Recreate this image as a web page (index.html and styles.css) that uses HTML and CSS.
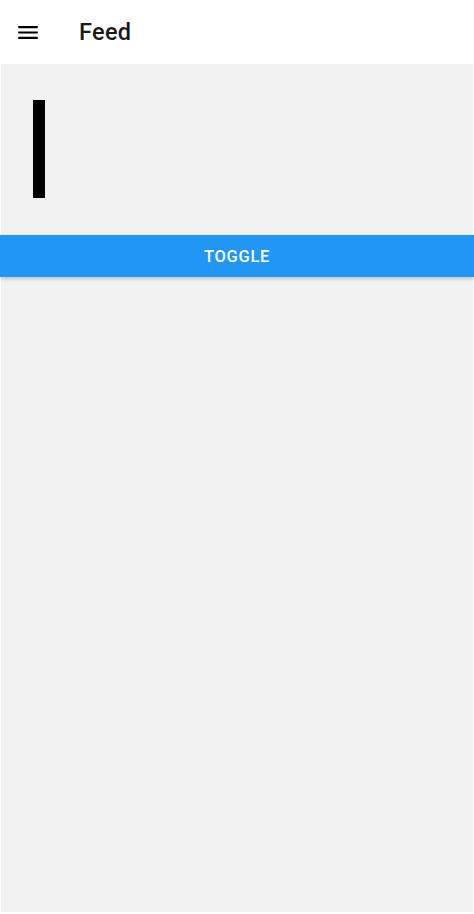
FILE: index.html
```html
<!DOCTYPE html>
<html>
<head>
<meta charset="utf-8">
<link rel="stylesheet" href="styles.css">
</head>
<body>
<div class="app">
  <header class="appbar">
    <button class="menu-btn" aria-label="menu">
      <svg width="24" height="24" viewBox="0 0 24 24"><path d="M3 18h18v-2H3v2zm0-5h18v-2H3v2zm0-7v2h18V6H3z" fill="#000"/></svg>
    </button>
    <h1 class="title">Feed</h1>
  </header>
  <main class="content">
    <div class="stage">
      <div class="bar"></div>
    </div>
    <button class="toggle">TOGGLE</button>
  </main>
</div>
</body>
</html>
```

FILE: styles.css
```css
html, body {
  margin: 0;
  padding: 0;
  background: #ffffff;
}
body {
  font-family: Roboto, "Noto Sans", sans-serif;
}
.app {
  width: 474px;
  height: 914px;
  display: flex;
  flex-direction: column;
}
.appbar {
  height: 64px;
  display: flex;
  align-items: center;
  background: #ffffff;
  flex: 0 0 auto;
}
.menu-btn {
  border: 0;
  background: none;
  padding: 0;
  margin: 0 0 0 15px;
  width: 26px;
  height: 26px;
  display: flex;
  align-items: center;
  justify-content: center;
}
.menu-btn svg {
  width: 27px;
  height: 27px;
}
.title {
  margin: 0 0 0 38px;
  font-size: 23.5px;
  font-weight: 500;
  color: #1a1a1a;
  letter-spacing: 0.3px;
}
.content {
  flex: 1 1 auto;
  background: #f2f2f2;
  margin: 0 1px 2px 1px;
  display: flex;
  flex-direction: column;
}
.stage {
  height: 171px;
  padding: 36px 0 0 32px;
  box-sizing: border-box;
}
.bar {
  width: 12px;
  height: 98px;
  background: #000000;
}
.toggle {
  height: 42px;
  margin: 0 -1px;
  border: 0;
  background: #2196f3;
  color: #ffffff;
  font-family: Roboto, "Noto Sans", sans-serif;
  font-size: 16.5px;
  font-weight: 500;
  letter-spacing: 0.7px;
  box-shadow: 0 2px 4px rgba(0,0,0,0.2);
}
```
